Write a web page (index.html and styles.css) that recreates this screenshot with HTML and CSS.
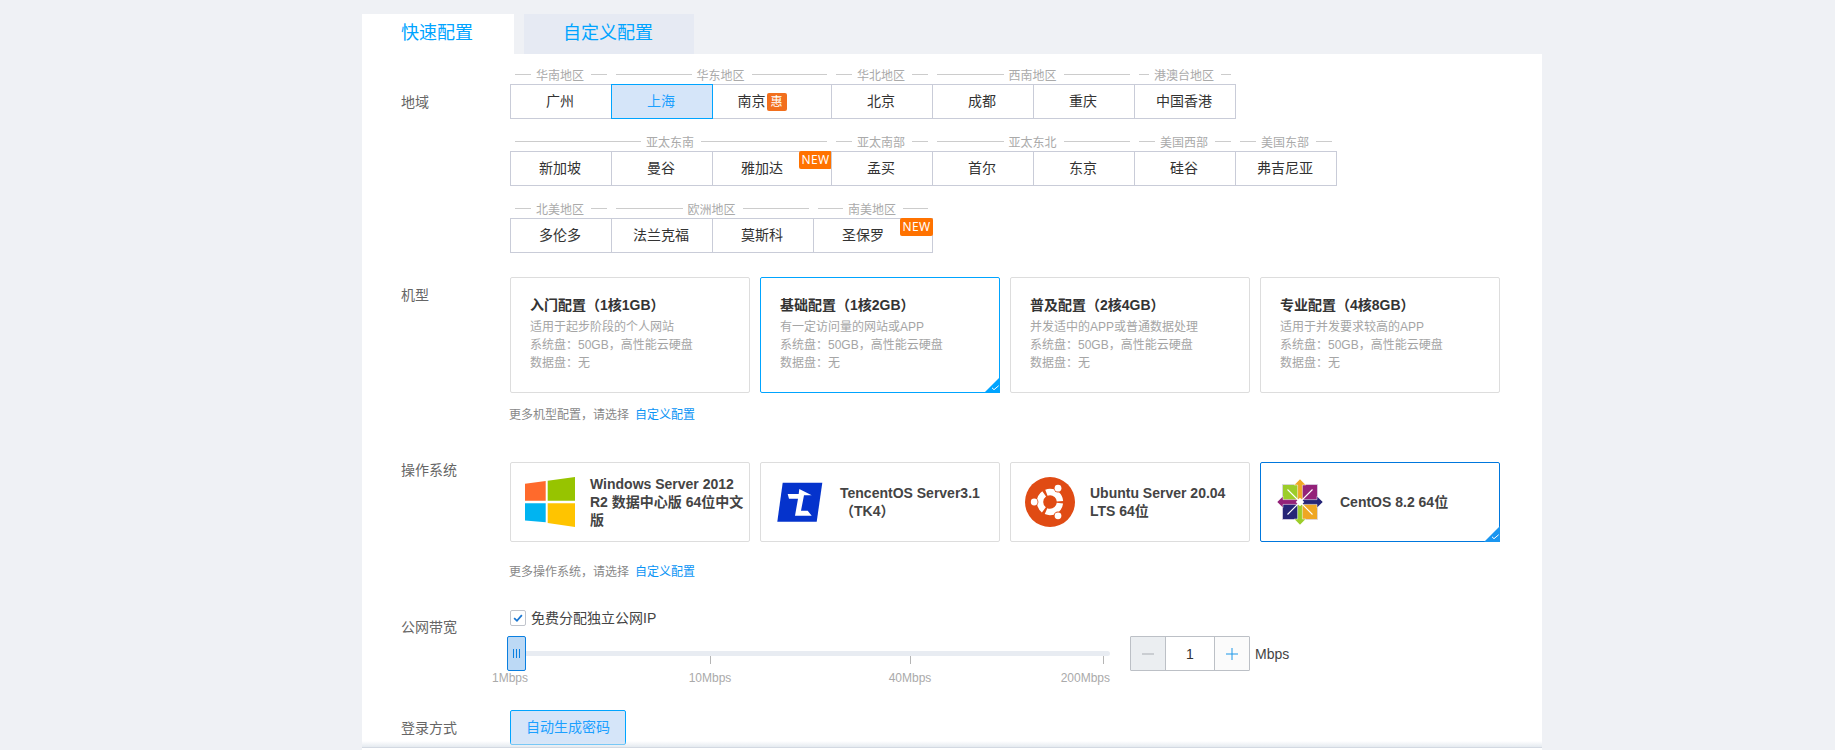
FILE: index.html
```html
<!DOCTYPE html>
<html lang="zh-CN">
<head>
<meta charset="utf-8">
<title>快速配置</title>
<link rel="stylesheet" href="styles.css">
</head>
<body>
<div class="page">
  <div class="tabs">
    <div class="tab tab-active">快速配置</div>
    <div class="tab">自定义配置</div>
  </div>
  <div class="panel">
    <div class="row row-region">
      <div class="label label-region">地域</div>
      <div class="regions">
        <div class="region-line">
          <div class="group"><div class="group-title">华南地区</div><div class="cities"><div class="city">广州</div></div></div>
          <div class="group"><div class="group-title">华东地区</div><div class="cities"><div class="city city-on">上海</div><div class="city city-wide">南京<span class="hui">惠</span></div></div></div>
          <div class="group"><div class="group-title">华北地区</div><div class="cities"><div class="city">北京</div></div></div>
          <div class="group"><div class="group-title">西南地区</div><div class="cities"><div class="city">成都</div><div class="city">重庆</div></div></div>
          <div class="group"><div class="group-title">港澳台地区</div><div class="cities"><div class="city">中国香港</div></div></div>
        </div>
        <div class="region-line">
          <div class="group"><div class="group-title">亚太东南</div><div class="cities"><div class="city">新加坡</div><div class="city">曼谷</div><div class="city city-wide">雅加达<span class="new">NEW</span></div></div></div>
          <div class="group"><div class="group-title">亚太南部</div><div class="cities"><div class="city">孟买</div></div></div>
          <div class="group"><div class="group-title">亚太东北</div><div class="cities"><div class="city">首尔</div><div class="city">东京</div></div></div>
          <div class="group"><div class="group-title">美国西部</div><div class="cities"><div class="city">硅谷</div></div></div>
          <div class="group"><div class="group-title">美国东部</div><div class="cities"><div class="city">弗吉尼亚</div></div></div>
        </div>
        <div class="region-line">
          <div class="group"><div class="group-title">北美地区</div><div class="cities"><div class="city">多伦多</div></div></div>
          <div class="group"><div class="group-title">欧洲地区</div><div class="cities"><div class="city">法兰克福</div><div class="city">莫斯科</div></div></div>
          <div class="group"><div class="group-title">南美地区</div><div class="cities"><div class="city city-wide">圣保罗<span class="new">NEW</span></div></div></div>
        </div>
      </div>
    </div>

    <div class="row row-type">
      <div class="label">机型</div>
      <div class="field">
        <div class="cards">
          <div class="card spec">
            <div class="spec-title">入门配置（1核1GB）</div>
            <div class="spec-line">适用于起步阶段的个人网站</div>
            <div class="spec-line">系统盘：50GB，高性能云硬盘</div>
            <div class="spec-line">数据盘：无</div>
          </div>
          <div class="card spec card-on">
            <div class="spec-title">基础配置（1核2GB）</div>
            <div class="spec-line">有一定访问量的网站或APP</div>
            <div class="spec-line">系统盘：50GB，高性能云硬盘</div>
            <div class="spec-line">数据盘：无</div>
            <svg class="corner" viewBox="0 0 16 16"><path d="M16 0V16H0Z" fill="#00a4ff"/><path d="M8 10.8 10 12.7 14.7 8.7" fill="none" stroke="#fff" stroke-width="1"/></svg>
          </div>
          <div class="card spec">
            <div class="spec-title">普及配置（2核4GB）</div>
            <div class="spec-line">并发适中的APP或普通数据处理</div>
            <div class="spec-line">系统盘：50GB，高性能云硬盘</div>
            <div class="spec-line">数据盘：无</div>
          </div>
          <div class="card spec">
            <div class="spec-title">专业配置（4核8GB）</div>
            <div class="spec-line">适用于并发要求较高的APP</div>
            <div class="spec-line">系统盘：50GB，高性能云硬盘</div>
            <div class="spec-line">数据盘：无</div>
          </div>
        </div>
        <div class="hint">更多机型配置，请选择<a class="link">自定义配置</a></div>
      </div>
    </div>

    <div class="row row-os">
      <div class="label">操作系统</div>
      <div class="field field-os">
        <div class="cards">
          <div class="card os">
            <svg class="os-icon" viewBox="0 0 50 50">
              <path d="M0 6.8 20.7 4V23.7H0Z" fill="#ff6a2c"/>
              <path d="M22.7 3.7 50 0V23.7H22.7Z" fill="#97c400"/>
              <path d="M0 26.3H20.7V45.3L0 43.5Z" fill="#00b4f1"/>
              <path d="M22.7 26.3H50V50L22.7 46Z" fill="#ffc400"/>
            </svg>
            <div class="os-name">Windows Server 2012 R2 数据中心版 64位中文版</div>
          </div>
          <div class="card os">
            <svg class="os-icon" viewBox="0 0 50 50">
              <path d="M7.7 5.7H47.3L41.7 44.7H2.3Z" fill="#0533cc"/>
              <path d="M24.3 12 36.7 18.3H29L26 33.7H32.7L36.7 38.7H20L23 21.7H14L12.7 17H23.7Z" fill="#fff"/>
            </svg>
            <div class="os-name">TencentOS Server3.1 （TK4）</div>
          </div>
          <div class="card os">
            <svg class="os-icon" viewBox="0 0 50 50">
              <circle cx="25" cy="25" r="25" fill="#e04b14"/>
              <circle cx="25" cy="25" r="10" fill="none" stroke="#fff" stroke-width="6.4" stroke-dasharray="18.4 2.54" stroke-dashoffset="-1.27"/>
              <circle cx="33" cy="11.2" r="4.2" fill="#e04b14"/>
              <circle cx="9.2" cy="25" r="4.2" fill="#e04b14"/>
              <circle cx="33" cy="38.8" r="4.2" fill="#e04b14"/>
              <circle cx="33" cy="11.2" r="3.4" fill="#fff"/>
              <circle cx="9.2" cy="25" r="3.4" fill="#fff"/>
              <circle cx="33" cy="38.8" r="3.4" fill="#fff"/>
            </svg>
            <div class="os-name">Ubuntu Server 20.04 LTS 64位</div>
          </div>
          <div class="card os card-os-on">
            <svg class="os-icon" viewBox="0 0 50 50">
              <rect x="7.5" y="7.5" width="16" height="16" fill="#9ccd2a" stroke="#d9d4e4" stroke-width=".8"/>
              <rect x="26.5" y="7.5" width="16" height="16" fill="#932279" stroke="#d9d4e4" stroke-width=".8"/>
              <rect x="26.5" y="26.5" width="16" height="16" fill="#efa724" stroke="#d9d4e4" stroke-width=".8"/>
              <rect x="7.5" y="26.5" width="16" height="16" fill="#262577" stroke="#d9d4e4" stroke-width=".8"/>
              <path d="M25 2 30.8 8H27.4V23H22.6V8H19.2Z" fill="#efa724" stroke="#fff" stroke-width=".5"/>
              <path d="M25 2 30.8 8H27.4V23H22.6V8H19.2Z" fill="#262577" stroke="#fff" stroke-width=".5" transform="rotate(90 25 25)"/>
              <path d="M25 2 30.8 8H27.4V23H22.6V8H19.2Z" fill="#9ccd2a" stroke="#fff" stroke-width=".5" transform="rotate(180 25 25)"/>
              <path d="M25 2 30.8 8H27.4V23H22.6V8H19.2Z" fill="#932279" stroke="#fff" stroke-width=".5" transform="rotate(270 25 25)"/>
              <path d="M25 25 12.5 12.5M25 25 37.5 12.5M25 25 37.5 37.5M25 25 12.5 37.5" stroke="#fff" stroke-width="1.1"/>
              <rect x="22" y="22" width="6" height="6" fill="#fff" transform="rotate(45 25 25)"/>
            </svg>
            <div class="os-name">CentOS 8.2 64位</div>
            <svg class="corner" viewBox="0 0 16 16"><path d="M16 0V16H0Z" fill="#1a96f0"/><path d="M8 10.8 10 12.7 14.7 8.7" fill="none" stroke="#fff" stroke-width="1"/></svg>
          </div>
        </div>
        <div class="hint hint-os">更多操作系统，请选择<a class="link">自定义配置</a></div>
      </div>
    </div>

    <div class="row row-net">
      <div class="label">公网带宽</div>
      <div class="field">
        <div class="check-line">
          <span class="check"><svg viewBox="0 0 16 16"><path d="M3.6 8.2 6.8 11.2 12.4 4.8" fill="none" stroke="#1976d2" stroke-width="2"/></svg></span>
          <span class="check-text">免费分配独立公网IP</span>
        </div>
        <div class="net-controls">
          <div class="slider">
            <div class="rail"><div class="track"></div></div>
            <div class="handle"><i></i><i></i><i></i></div>
            <div class="marks">
              <div class="mark"><span class="tick"></span><span class="mark-text">1Mbps</span></div>
              <div class="mark"><span class="tick"></span><span class="mark-text">10Mbps</span></div>
              <div class="mark"><span class="tick"></span><span class="mark-text">40Mbps</span></div>
              <div class="mark mark-end"><span class="tick"></span><span class="mark-text">200Mbps</span></div>
            </div>
          </div>
          <div class="stepper">
            <div class="step step-minus"><svg viewBox="0 0 12 12"><path d="M0 6H12" stroke="#a9adb3" stroke-width="1"/></svg></div>
            <div class="step-value">1</div>
            <div class="step step-plus"><svg viewBox="0 0 12 12"><path d="M0 6H12M6 0V12" stroke="#1c97e8" stroke-width="1"/></svg></div>
          </div>
          <div class="unit">Mbps</div>
        </div>
      </div>
    </div>

    <div class="row row-login">
      <div class="label">登录方式</div>
      <div class="field"><div class="login-btn">自动生成密码</div></div>
    </div>
  </div>
  <div class="footer-shadow"></div>
</div>
</body>
</html>
```

FILE: styles.css
```css
* {
  box-sizing: border-box;
}

html,
body {
  height: 750px;
  overflow: hidden;
}

body {
  margin: 0;
  padding: 14px 0 0 362px;
  background: #eff1f5;
  color: #333;
  font-family: "Liberation Sans", "Noto Sans CJK SC", sans-serif;
  font-size: 14px;
}

.page {
  position: relative;
  width: 1180px;
  height: 736px;
}

.tabs {
  display: flex;
  gap: 10px;
  height: 40px;
}

.tab {
  padding: 0 41px 0 39px;
  background: #e6eaf3;
  color: #00a4ff;
  font-size: 18px;
  line-height: 38px;
}

.tab-active {
  background: #fff;
}

.panel {
  height: 696px;
  padding: 10px 40px 0 39px;
  background: #fff;
}

.row {
  display: flex;
}

.label {
  flex: none;
  width: 109px;
  padding-top: 8px;
  color: #666;
  line-height: 20px;
}

.label-region {
  padding-top: 28px;
}

.field {
  flex: 1;
  min-width: 0;
}

.row-type {
  margin-top: 24px;
}

.row-os {
  margin-top: 27px;
}

.field-os {
  padding-top: 10px;
}

.row-net {
  margin-top: 28px;
}

.row-net .label {
  padding-top: 7px;
}

.row-login {
  margin-top: 25px;
}

/* regions */
.region-line {
  display: flex;
  margin-bottom: 12px;
}

.region-line:last-child {
  margin-bottom: 0;
}

.group + .group {
  margin-left: -1px;
}

.group-title {
  display: flex;
  align-items: center;
  gap: 6px;
  height: 20px;
  margin: 0 5px;
  color: #aaa;
  font-size: 12px;
  white-space: nowrap;
}

.group-title::before,
.group-title::after {
  content: "";
  flex: 1;
  height: 1px;
  background: #ccc;
}

.group-title::before {
  margin-right: -1px;
}

.group-title::after {
  margin-left: 1px;
}

.cities {
  display: flex;
}

.city {
  position: relative;
  width: 102px;
  height: 35px;
  padding-right: 2px;
  border: 1px solid #c9ccd8;
  color: #333;
  line-height: 33px;
  text-align: center;
  white-space: nowrap;
}

.city + .city {
  margin-left: -1px;
}

.city-wide {
  width: 120px;
  padding-right: 20px;
}

.city-on {
  z-index: 1;
  border-color: #00a4ff;
  background: #d5e5f9;
  color: #1ba0ff;
}

.hui {
  display: inline-block;
  width: 20px;
  height: 18px;
  margin-left: 1px;
  border-radius: 2px;
  background: #f26f1d;
  color: #fff;
  font-size: 12px;
  line-height: 18px;
  vertical-align: 0;
}

.new {
  position: absolute;
  top: -1px;
  right: -1px;
  width: 33px;
  height: 18px;
  border-radius: 2px;
  background: #ff7200;
  color: #fff;
  font-family: "Noto Sans", sans-serif;
  font-size: 12px;
  letter-spacing: .3px;
  line-height: 18px;
  text-align: center;
}

/* cards */
.cards {
  display: flex;
  gap: 10px;
}

.card {
  position: relative;
  width: 240px;
  border: 1px solid #ddd;
  border-radius: 2px;
  background: #fff;
}

.spec {
  height: 116px;
  padding: 17px 19px 0;
}

.card-on {
  border-color: #00a4ff;
}

.spec-title {
  margin-bottom: 3px;
  color: #333;
  font-weight: 700;
  line-height: 20px;
}

.spec-line {
  color: #a5a5a5;
  font-size: 12px;
  line-height: 18px;
}

.corner {
  position: absolute;
  right: -1px;
  bottom: -1px;
  width: 16px;
  height: 16px;
}

.hint {
  margin-top: 12px;
  margin-left: -1px;
  color: #888;
  font-size: 12px;
  line-height: 20px;
}

.hint-os {
  margin-top: 20px;
}

.link {
  margin-left: 6px;
  color: #0a94f5;
}

.os {
  display: flex;
  align-items: center;
  gap: 15px;
  height: 80px;
  padding: 0 5px 0 14px;
}

.card-os-on {
  border-color: #0077dd;
}

.os-icon {
  flex: none;
  width: 50px;
  height: 50px;
}

.os-name {
  color: #444;
  font-weight: 700;
  line-height: 18px;
}

/* bandwidth */
.check-line {
  display: flex;
  align-items: center;
  gap: 5px;
  height: 16px;
  color: #444;
}

.check-text {
  margin-top: -2px;
}

.check {
  flex: none;
  width: 16px;
  height: 16px;
  border: 1px solid #c0c4cc;
  border-radius: 2px;
  background: #fff;
}

.check svg {
  display: block;
  width: 14px;
  height: 14px;
}

.net-controls {
  display: flex;
  margin-top: 10px;
}

.slider {
  position: relative;
  flex: none;
  width: 600px;
}

.rail {
  display: flex;
  align-items: flex-end;
  height: 20px;
  padding-left: 16px;
}

.track {
  flex: 1;
  height: 5px;
  border-radius: 0 3px 3px 0;
  background: #e8ecf2;
}

.handle {
  position: absolute;
  top: 0;
  left: -3px;
  display: flex;
  align-items: center;
  justify-content: center;
  gap: 2px;
  width: 19px;
  height: 35px;
  border: 1px solid #0a7fe0;
  border-radius: 2px;
  background: #bcd9f5;
}

.handle i {
  width: 1px;
  height: 9px;
  background: #0a7fe0;
}

.marks {
  display: flex;
  justify-content: space-between;
}

.mark {
  display: flex;
  flex-direction: column;
  align-items: center;
  width: 0;
  white-space: nowrap;
}

.mark-end {
  align-items: flex-end;
}

.tick {
  width: 1px;
  height: 8px;
  background: #b5b5b5;
}

.mark-end .tick {
  margin-right: 6px;
}

.mark-text {
  margin-top: 7px;
  color: #aaa;
  font-size: 12px;
  line-height: 14px;
}

.stepper {
  display: flex;
  align-self: flex-start;
  height: 35px;
  margin-left: 20px;
  border: 1px solid #bcc0c6;
  border-radius: 1px;
}

.step {
  display: flex;
  align-items: center;
  justify-content: center;
  width: 34px;
}

.step svg {
  width: 12px;
  height: 12px;
}

.step-minus {
  background: #ebeef1;
}

.step-plus {
  background: #fbfbfb;
}

.step-value {
  width: 50px;
  border-right: 1px solid #bcc0c6;
  border-left: 1px solid #bcc0c6;
  color: #333;
  line-height: 35px;
  text-align: center;
}

.unit {
  align-self: flex-start;
  margin-left: 5px;
  color: #444;
  line-height: 37px;
}

.login-btn {
  width: 116px;
  height: 35px;
  border: 1px solid #00a4ff;
  border-radius: 2px;
  background: #d5e5f9;
  color: #1ba0ff;
  line-height: 33px;
  text-align: center;
}

.footer-shadow {
  position: absolute;
  right: 0;
  bottom: 2px;
  left: 0;
  height: 7px;
  border-bottom: 1px solid #d3d9e2;
  background: linear-gradient(rgba(226, 232, 238, 0), rgba(226, 232, 238, 0.9));
}
```
